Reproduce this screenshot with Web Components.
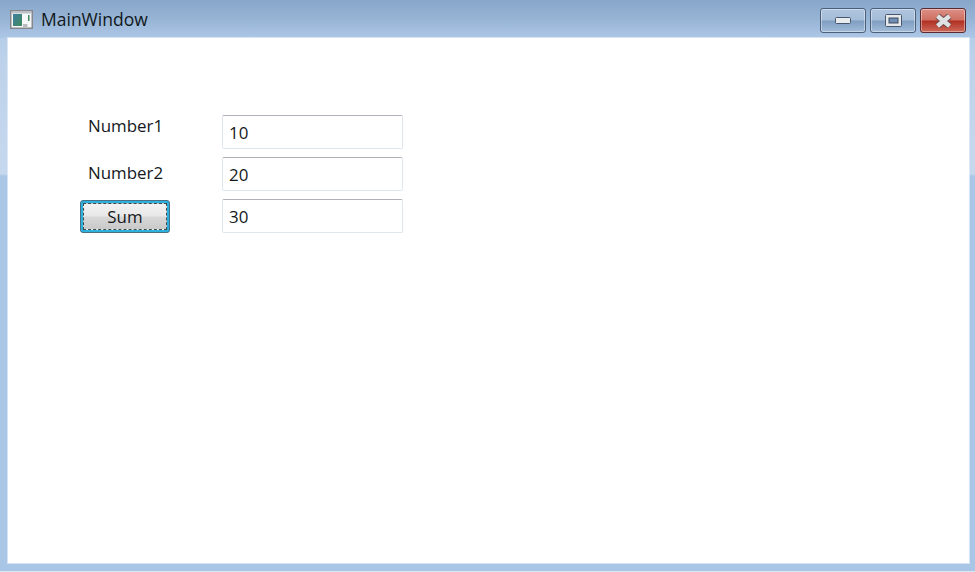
<!DOCTYPE html>
<html>
<head>
<meta charset="utf-8">
<title>MainWindow</title>
<style>
  html, body { margin: 0; padding: 0; height: 100%; overflow: hidden; }
  body { font-family: "Open Sans", "Noto Sans", sans-serif; }
</style>
</head>
<body>
<template id="caption-button-tpl">
  <style>
    :host { display: flex; align-items: center; justify-content: center; box-sizing: border-box; width: 46px; height: 25px;
      border: 1px solid #4a5f7c; border-radius: 3px; box-shadow: inset 0 0 0 1px rgba(255,255,255,.4);
      background: linear-gradient(#b0c5de 0, #a5bcd8 48%, #7f9dc0 52%, #a3bdda 100%); }
    :host([kind="close"]) { border-color: #5a2a30; background: linear-gradient(#dc8f85 0, #cf6f62 48%, #b02f22 52%, #cd6a5a 100%); }
    svg { display: block; margin-top: 5px; }
    :host([kind="max"]) svg { margin-top: 0; }
    :host([kind="close"]) svg { margin-top: -2px; }
  </style>
  <slot></slot>
</template>

<template id="title-bar-tpl">
  <style>
    :host { display: flex; align-items: center; height: 38px; box-sizing: border-box; padding: 0 9px 0 10px;
      background: linear-gradient(#88a6c9 0, #97b4d5 50%, #adc7e6 100%); }
    .icon { width: 23px; height: 19px; margin-right: 8px; flex: none; }
    .title { font-size: 17.5px; color: #101820; flex: 1; }
    .buttons { display: flex; gap: 4px; margin-top: 3px; }
  </style>
  <svg class="icon" viewBox="0 0 23 19">
    <defs><linearGradient id="ig" x1="0" y1="0" x2="1" y2="1"><stop offset="0" stop-color="#3f7fa0"/><stop offset="1" stop-color="#3f8a5c"/></linearGradient></defs>
    <rect x="0.75" y="0.75" width="21.5" height="17.5" fill="#f6f7f8" stroke="#85878a" stroke-width="1.5"/>
    <rect x="1.5" y="1.5" width="20" height="2" fill="#b9c1ca"/>
    <rect x="3" y="4" width="9" height="12" fill="url(#ig)"/>
    <rect x="13" y="14" width="4.5" height="3" fill="#b9bcbf"/>
    <rect x="18" y="5" width="1.5" height="6" fill="#3f8a5c"/>
  </svg>
  <div class="title"><slot></slot></div>
  <div class="buttons"><slot name="buttons"></slot></div>
</template>

<template id="text-box-tpl">
  <style>
    :host { display: block; box-sizing: border-box; width: 181px; height: 34px; padding: 5px 6px 0; background: #fff;
      border: 1px solid #dfe5ef; border-top-color: #aeb1ba; border-radius: 2px;
      font-size: 16.9px; line-height: 24px; color: #15181c; }
  </style>
  <slot></slot>
</template>

<template id="push-button-tpl">
  <style>
    :host { display: block; box-sizing: border-box; width: 90px; height: 33px; padding: 2px; border-radius: 3px;
      border: 1px solid #4c6f86; background: #2cb0dc; }
    .face { height: 100%; box-sizing: border-box; border: 1px dashed #3f4a50; display: flex; align-items: center; justify-content: center;
      background: linear-gradient(#f2f2f2 0, #e8e8e8 48%, #d8d8d8 52%, #c9c9c9 100%);
      font-size: 16.9px; color: #15181c; }
  </style>
  <div class="face"><slot></slot></div>
</template>

<template id="sum-form-tpl">
  <style>
    :host { display: grid; grid-template-columns: 142px 181px; grid-template-rows: 34px 34px 34px; row-gap: 8px; align-items: start;
      padding: 77px 0 0 72px; font-size: 16.9px; color: #15181c; }
    .label { padding: 0 0 0 8px; line-height: 24px; margin-top: -1px; }
    .label.second { margin-top: 4px; }
    .btn-cell { margin-top: 1px; }
  </style>
  <div class="label"><slot name="label1"></slot></div>
  <slot name="box1"></slot>
  <div class="label second"><slot name="label2"></slot></div>
  <slot name="box2"></slot>
  <div class="btn-cell"><slot name="action"></slot></div>
  <slot name="box3"></slot>
</template>

<template id="app-window-tpl">
  <style>
    :host { display: flex; flex-direction: column; width: 975px; height: 572px; box-sizing: border-box;
      background: linear-gradient(#a9c6e6 0, #bdd2ea 60px, #c6d8ee 174px, #a9c6e6 176px, #a9c6e6 100%); }
    .client { flex: none; height: 525px; margin: 0 6px 0 8px; background: #fff; box-shadow: 0 0 0 1px rgba(232,240,250,.7); }
    .foot { flex: 1; border-bottom: 1px solid #dce7f4; }
  </style>
  <slot name="bar"></slot>
  <div class="client"><slot></slot></div>
  <div class="foot"></div>
</template>

<app-window>
  <title-bar slot="bar">MainWindow
    <caption-button slot="buttons" kind="min">
      <svg width="16" height="7" viewBox="0 0 16 7"><rect x="0.5" y="0.5" width="15" height="6" rx="1" fill="#e8ebee" stroke="#46566c"/></svg>
    </caption-button>
    <caption-button slot="buttons" kind="max">
      <svg width="17" height="13" viewBox="0 0 17 13"><rect x="0.5" y="0.5" width="16" height="12" rx="1" fill="#e6e9ec" stroke="#46566c"/><rect x="4" y="4" width="9" height="5" fill="#6d8db2" stroke="#3e4c60" stroke-width="1"/></svg>
    </caption-button>
    <caption-button slot="buttons" kind="close">
      <svg width="19" height="14" viewBox="0 0 19 14"><path d="M3.5 2 L15.5 12 M15.5 2 L3.5 12" stroke="#6b4a4a" stroke-width="6.4"/><path d="M3.5 2 L15.5 12 M15.5 2 L3.5 12" stroke="#dfe1e3" stroke-width="4.4"/></svg>
    </caption-button>
  </title-bar>
  <sum-form>
    <span slot="label1">Number1</span>
    <text-box slot="box1">10</text-box>
    <span slot="label2">Number2</span>
    <text-box slot="box2">20</text-box>
    <push-button slot="action">Sum</push-button>
    <text-box slot="box3">30</text-box>
  </sum-form>
</app-window>

<script>
  // every element just clones its template into an open shadow root
  function define(name, tplId) {
    customElements.define(name, class extends HTMLElement {
      constructor() {
        super();
        this.attachShadow({mode: 'open'}).appendChild(document.getElementById(tplId).content.cloneNode(true));
      }
    });
  }
  define('caption-button', 'caption-button-tpl');
  define('title-bar', 'title-bar-tpl');
  define('text-box', 'text-box-tpl');
  define('push-button', 'push-button-tpl');
  define('sum-form', 'sum-form-tpl');
  define('app-window', 'app-window-tpl');
</script>
</body>
</html>
